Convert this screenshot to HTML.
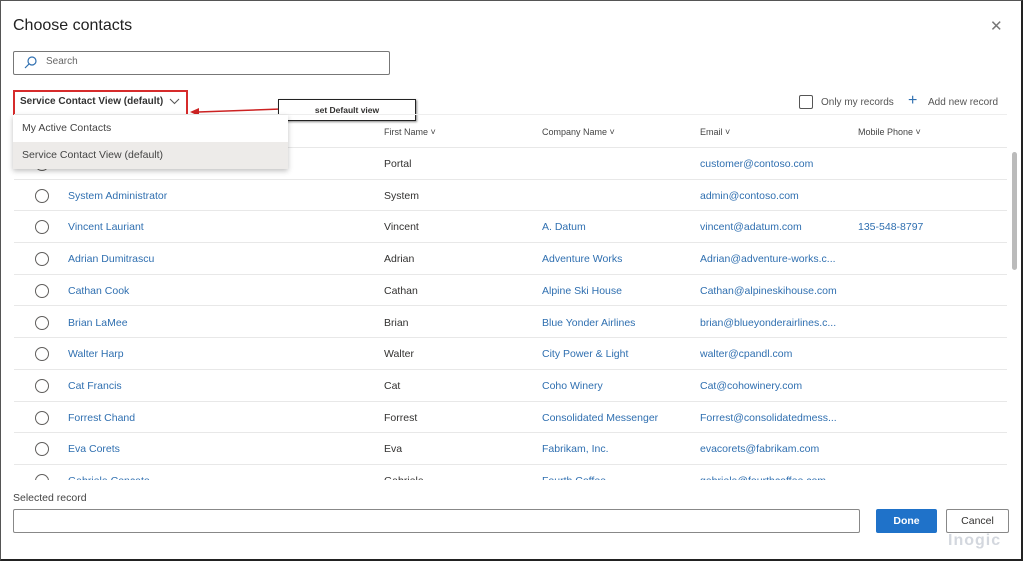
<!DOCTYPE html>
<html><head><style>
*{box-sizing:border-box;margin:0;padding:0}
body{width:1024px;height:562px;background:#fff;font-family:"Liberation Sans",sans-serif;position:relative;overflow:hidden;color:#323130}
.frame{position:absolute;left:0;top:0;width:1023px;height:561px;border:1px solid #555;border-right:2px solid #222;border-bottom:2px solid #222}
.a{position:absolute;white-space:nowrap}
.row{position:absolute;left:14px;width:993px;height:31.7px;border-bottom:1px solid #e8e8e8;font-size:10.5px}
.row span{position:absolute;top:10px}
.radio{position:absolute;left:21px;top:9px;width:14px;height:14px;border:1px solid #605e5c;border-radius:50%}
.lk{color:#2f6fb0}
.hd{font-size:9px;color:#444;top:127px}
</style></head><body>
<div class="frame"></div>
<div class="a" style="left:13px;top:17px;font-size:16px;color:#222">Choose contacts</div>
<div class="a" style="left:990px;top:17px;font-size:15px;color:#777">✕</div>
<div class="a" style="left:13px;top:51px;width:377px;height:24px;border:1px solid #777;border-radius:2px"></div>
<svg class="a" style="left:24px;top:56px" width="13" height="13" viewBox="0 0 13 13"><circle cx="8" cy="5" r="4" fill="none" stroke="#2f6fb0" stroke-width="1.2"/><path d="M5 8L1 12" stroke="#2f6fb0" stroke-width="1.2"/></svg>
<div class="a" style="left:46px;top:56px;font-size:10px;color:#666">Search</div>
<div class="a" style="left:13px;top:90px;width:175px;height:26px;border:2px solid #d62b2b;background:#fff"></div>
<div class="a" style="left:20px;top:96px;font-size:10px;font-weight:bold;color:#333">Service Contact View (default)</div>
<svg class="a" style="left:169px;top:98px" width="11" height="7"><path d="M1 1L5.5 5.5L10 1" fill="none" stroke="#555" stroke-width="1"/></svg>
<svg class="a" style="left:188px;top:104px" width="95" height="12"><path d="M93 5L10 8" stroke="#c22" stroke-width="1.5"/><path d="M2 8L11 4L11 12Z" fill="#c22"/></svg>
<div class="a" style="left:278px;top:99px;width:138px;height:22px;border:1px solid #222;box-shadow:1px 1px 2px #888;background:#fff;font-size:8.5px;font-weight:bold;text-align:center;line-height:20px">set Default view</div>
<div class="a" style="left:799px;top:95px;width:14px;height:14px;border:1px solid #555;border-radius:2px"></div>
<div class="a" style="left:821px;top:97px;font-size:10px;color:#555">Only my records</div>
<div class="a" style="left:908px;top:92px;font-size:16px;color:#2f6fb0">+</div>
<div class="a" style="left:928px;top:97px;font-size:10px;color:#555">Add new record</div>
<div class="a" style="left:14px;top:114px;width:993px;height:1px;background:#eee"></div>
<div class="a hd" style="left:384px">First Name ˅</div>
<div class="a hd" style="left:542px">Company Name ˅</div>
<div class="a hd" style="left:700px">Email ˅</div>
<div class="a hd" style="left:858px">Mobile Phone ˅</div>
<div class="a" style="left:14px;top:147px;width:993px;height:1px;background:#e8e8e8"></div>
<div style="position:absolute;left:0;top:148px;width:1024px;height:332px;overflow:hidden">
<div class="row" style="top:0"><div class="radio"></div><span style="left:370px">Portal</span><span class="lk" style="left:686px">customer@contoso.com</span></div>
<div class="row" style="top:31.7px"><div class="radio"></div><span class="lk" style="left:54px">System Administrator</span><span style="left:370px">System</span><span class="lk" style="left:686px">admin@contoso.com</span></div>
<div class="row" style="top:63.4px"><div class="radio"></div><span class="lk" style="left:54px">Vincent Lauriant</span><span style="left:370px">Vincent</span><span class="lk" style="left:528px">A. Datum</span><span class="lk" style="left:686px">vincent@adatum.com</span><span class="lk" style="left:844px">135-548-8797</span></div>
<div class="row" style="top:95.1px"><div class="radio"></div><span class="lk" style="left:54px">Adrian Dumitrascu</span><span style="left:370px">Adrian</span><span class="lk" style="left:528px">Adventure Works</span><span class="lk" style="left:686px">Adrian@adventure-works.c...</span></div>
<div class="row" style="top:126.8px"><div class="radio"></div><span class="lk" style="left:54px">Cathan Cook</span><span style="left:370px">Cathan</span><span class="lk" style="left:528px">Alpine Ski House</span><span class="lk" style="left:686px">Cathan@alpineskihouse.com</span></div>
<div class="row" style="top:158.5px"><div class="radio"></div><span class="lk" style="left:54px">Brian LaMee</span><span style="left:370px">Brian</span><span class="lk" style="left:528px">Blue Yonder Airlines</span><span class="lk" style="left:686px">brian@blueyonderairlines.c...</span></div>
<div class="row" style="top:190.2px"><div class="radio"></div><span class="lk" style="left:54px">Walter Harp</span><span style="left:370px">Walter</span><span class="lk" style="left:528px">City Power &amp; Light</span><span class="lk" style="left:686px">walter@cpandl.com</span></div>
<div class="row" style="top:221.9px"><div class="radio"></div><span class="lk" style="left:54px">Cat Francis</span><span style="left:370px">Cat</span><span class="lk" style="left:528px">Coho Winery</span><span class="lk" style="left:686px">Cat@cohowinery.com</span></div>
<div class="row" style="top:253.6px"><div class="radio"></div><span class="lk" style="left:54px">Forrest Chand</span><span style="left:370px">Forrest</span><span class="lk" style="left:528px">Consolidated Messenger</span><span class="lk" style="left:686px">Forrest@consolidatedmess...</span></div>
<div class="row" style="top:285.3px"><div class="radio"></div><span class="lk" style="left:54px">Eva Corets</span><span style="left:370px">Eva</span><span class="lk" style="left:528px">Fabrikam, Inc.</span><span class="lk" style="left:686px">evacorets@fabrikam.com</span></div>
<div class="row" style="top:317px"><div class="radio"></div><span class="lk" style="left:54px">Gabriela Cencato</span><span style="left:370px">Gabriela</span><span class="lk" style="left:528px">Fourth Coffee</span><span class="lk" style="left:686px">gabriela@fourthcoffee.com</span></div>
</div>
<div class="a" style="left:1012px;top:152px;width:5px;height:118px;background:#bbb;border-radius:3px"></div>
<div class="a" style="left:13px;top:115px;width:275px;height:54px;background:#fff;box-shadow:0 2px 5px rgba(0,0,0,.25)"></div>
<div class="a" style="left:22px;top:122px;font-size:10.5px;color:#444">My Active Contacts</div>
<div class="a" style="left:13px;top:142px;width:275px;height:27px;background:#edebe9"></div>
<div class="a" style="left:22px;top:149px;font-size:10.5px;color:#444">Service Contact View (default)</div>
<div class="a" style="left:13px;top:492px;font-size:10.5px;color:#444">Selected record</div>
<div class="a" style="left:13px;top:509px;width:847px;height:24px;border:1px solid #888;border-radius:2px"></div>
<div class="a" style="left:876px;top:509px;width:61px;height:24px;background:#1f72c9;color:#fff;font-size:10.5px;font-weight:bold;text-align:center;line-height:24px;border-radius:2px">Done</div>
<div class="a" style="left:946px;top:509px;width:63px;height:24px;border:1px solid #888;font-size:10.5px;text-align:center;line-height:22px;border-radius:2px">Cancel</div>
<div class="a" style="left:948px;top:532px;font-size:16px;font-weight:bold;color:#d3d7de;letter-spacing:1px">Inogic</div>
</body></html>
